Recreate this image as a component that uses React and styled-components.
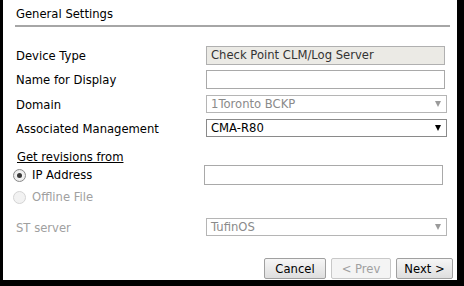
import React from 'react';
import styled, { createGlobalStyle } from 'styled-components';

const GlobalStyle = createGlobalStyle`
  html, body { margin: 0; padding: 0; background: #fff; }
  body { font-family: "DejaVu Sans", Verdana, sans-serif; }
`;

const Frame = styled.div`
  width: 464px;
  height: 286px;
  box-sizing: border-box;
  border-left: 3px solid #000;
  border-right: 7px solid #000;
  border-bottom: 6px solid #000;
  background: #fff;
  display: flex;
  flex-direction: column;
  font-size: 11.6px;
  color: #000;
`;

const Header = styled.div`
  margin: 0 7px 0 12px;
  height: 27px;
  box-sizing: border-box;
  padding: 7px 0 0 1px;
  border-bottom: 2px solid #a6a6a6;
  font-size: 11.6px;
`;

const Form = styled.div`
  display: flex;
  flex-direction: column;
  padding: 16px 0 0 13px;
`;

const Row = styled.div`
  display: grid;
  grid-template-columns: 190px 241px;
  align-items: center;
  height: ${p => p.h || 24}px;
  margin-top: ${p => p.mt || 0}px;
`;

const Label = styled.span`
  font-size: 11.6px;
  padding-top: 1px;
  color: ${p => (p.disabled ? '#a0a0a0' : '#000')};
`;

const Field = styled.div`
  box-sizing: border-box;
  height: ${p => p.h || 19}px;
  width: ${p => p.w || 239}px;
  margin-left: ${p => p.ml || 0}px;
  border: 1px solid ${p => p.border || '#a9a9a9'};
  background: ${p => p.bg || '#fff'};
  padding: 0 4px;
  display: flex;
  align-items: center;
  justify-content: space-between;
  font-size: 11.6px;
  color: ${p => p.color || '#000'};
`;

const Arrow = styled.span`
  width: 0;
  height: 0;
  margin-right: 1px;
  border-left: 3px solid transparent;
  border-right: 3px solid transparent;
  border-top: 6px solid ${p => p.color || '#000'};
`;

const SectionTitle = styled.div`
  font-size: 11.6px;
  text-decoration: underline;
  margin-top: 11px;
  height: 14px;
  line-height: 14px;
  margin-left: 1px;
`;

const RadioRow = styled.label`
  display: flex;
  align-items: center;
  gap: 6px;
  margin-left: -3px;
  font-size: 11.6px;
  color: ${p => (p.disabled ? '#a0a0a0' : '#000')};
`;

const Radio = styled.span`
  box-sizing: border-box;
  width: 13px;
  height: 13px;
  border-radius: 50%;
  border: 1px solid ${p => (p.disabled ? '#d4d4d4' : '#8a8a8a')};
  background: ${p => (p.disabled ? '#f2f2f2' : 'radial-gradient(circle, #fff 0, #e2e2e2 100%)')};
  display: flex;
  align-items: center;
  justify-content: center;
  &::after {
    content: '';
    display: ${p => (p.checked ? 'block' : 'none')};
    width: 5px;
    height: 5px;
    border-radius: 50%;
    background: #3a3a3a;
  }
`;

const Footer = styled.div`
  margin-top: auto;
  display: flex;
  justify-content: flex-end;
  gap: 5px;
  padding: 0 4px 1px 0;
`;

const Button = styled.button`
  box-sizing: border-box;
  height: 21px;
  min-width: ${p => p.w || 60}px;
  padding: 0 6px;
  border: 1px solid ${p => (p.disabled ? '#c8c8c8' : '#a0a0a0')};
  border-radius: 2px;
  background: ${p => (p.disabled ? '#f4f4f4' : 'linear-gradient(#f6f6f6, #dedede)')};
  font-family: "DejaVu Sans", Verdana, sans-serif;
  font-size: 11.6px;
  color: ${p => (p.disabled ? '#a0a0a0' : '#000')};
`;

export default function App() {
  return (
    <>
      <GlobalStyle />
      <Frame>
        <Header>General Settings</Header>
        <Form>
          <Row h={24}>
            <Label>Device Type</Label>
            <Field bg="#ebeae5" border="#b0b0b0" color="#333">Check Point CLM/Log Server</Field>
          </Row>
          <Row h={24}>
            <Label>Name for Display</Label>
            <Field />
          </Row>
          <Row h={26}>
            <Label>Domain</Label>
            <Field w={241} h={18} border="#b5b5b5" color="#8a8a8a">
              1Toronto BCKP <Arrow color="#9a9a9a" />
            </Field>
          </Row>
          <Row h={22}>
            <Label>Associated Management</Label>
            <Field w={241} h={18} border="#8a8a8a">
              CMA-R80 <Arrow />
            </Field>
          </Row>
          <SectionTitle>Get revisions from</SectionTitle>
          <Row h={22}>
            <RadioRow><Radio checked />IP Address</RadioRow>
            <Field ml={-2} h={20} />
          </Row>
          <Row h={22}>
            <RadioRow disabled><Radio disabled />Offline File</RadioRow>
          </Row>
          <Row h={22} mt={8}>
            <Label disabled>ST server</Label>
            <Field w={241} h={18} border="#b5b5b5" color="#8a8a8a">
              TufinOS <Arrow color="#9a9a9a" />
            </Field>
          </Row>
        </Form>
        <Footer>
          <Button w={62}>Cancel</Button>
          <Button w={60} disabled>&lt; Prev</Button>
          <Button w={57}>Next &gt;</Button>
        </Footer>
      </Frame>
    </>
  );
}
